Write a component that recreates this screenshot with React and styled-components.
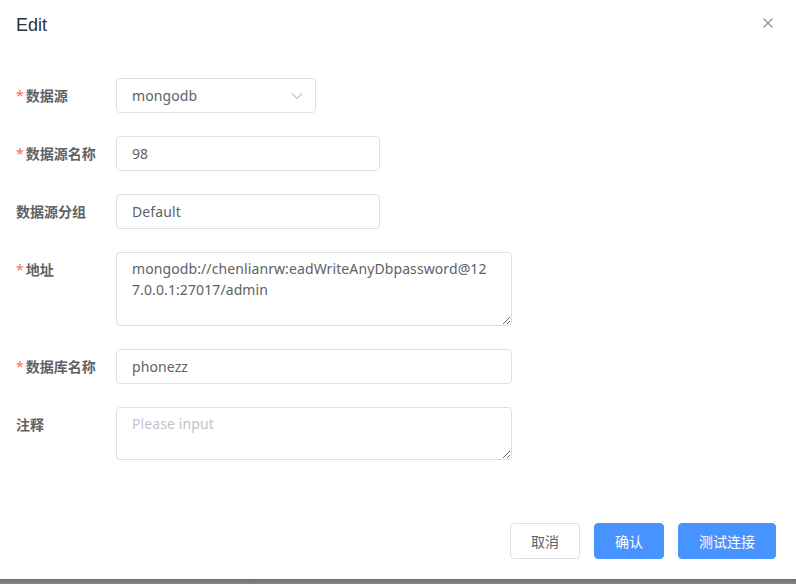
import React from 'react';
import styled, { createGlobalStyle } from 'styled-components';

const GlobalStyle = createGlobalStyle`
  html, body {
    margin: 0;
    padding: 0;
    background: #fff;
  }
  * { box-sizing: border-box; }
  body {
    font-family: "Noto Sans", "Noto Sans CJK SC", sans-serif;
  }
`;

const Page = styled.div`
  height: 584px;
  display: flex;
  flex-direction: column;
`;

const Dialog = styled.div`
  flex: 1;
  display: flex;
  flex-direction: column;
  background: #fff;
`;

const Header = styled.div`
  display: flex;
  justify-content: space-between;
  align-items: center;
  padding: 13px 23px 0 16px;
  height: 37px;
`;

const Title = styled.span`
  font-family: "Liberation Sans", sans-serif;
  font-size: 18px;
  line-height: 26px;
  color: #303133;
`;

const CloseBtn = styled.button`
  border: 0;
  background: none;
  padding: 0;
  width: 10px;
  height: 10px;
  display: flex;
  cursor: pointer;
  margin-top: -4px;
`;

const Form = styled.div`
  padding: 41px 16px 0;
  display: flex;
  flex-direction: column;
  gap: 23px;
`;

const Row = styled.div`
  display: flex;
  align-items: flex-start;
`;

const Label = styled.label`
  width: 100px;
  flex: none;
  font-size: 14px;
  font-weight: 700;
  line-height: 35px;
  color: #606266;
`;

const Star = styled.span`
  color: #f56c6c;
  margin-right: 2px;
  font-weight: 400;
`;

const Field = styled.input`
  width: ${p => p.$w}px;
  height: 35px;
  border: 1px solid #dcdfe6;
  border-radius: 4px;
  padding: 0 15px;
  font: inherit;
  font-size: 14px;
  letter-spacing: 0.1px;
  color: #606266;
  outline: none;
  background: #fff;
`;

const SelectBox = styled.div`
  width: 200px;
  height: 35px;
  border: 1px solid #dcdfe6;
  border-radius: 4px;
  padding: 0 12px 0 15px;
  display: flex;
  align-items: center;
  justify-content: space-between;
  font-size: 14px;
  letter-spacing: 0.1px;
  color: #606266;
  cursor: pointer;
`;

const Area = styled.textarea`
  width: 396px;
  height: ${p => p.$h}px;
  border: 1px solid #dcdfe6;
  border-radius: 4px;
  padding: 5px 20px 5px 15px;
  font: inherit;
  font-size: 14px;
  letter-spacing: 0.1px;
  line-height: 21px;
  color: #606266;
  outline: none;
  display: block;
  &::placeholder { color: #c0c4cc; }
`;

const Footer = styled.div`
  margin-top: auto;
  display: flex;
  justify-content: flex-end;
  gap: 14px;
  padding: 0 20px 20px;
`;

const Button = styled.button`
  height: 36px;
  padding: 0 20px;
  border-radius: 4px;
  font: inherit;
  font-size: 14px;
  cursor: pointer;
  border: 1px solid ${p => (p.$primary ? '#4793ff' : '#dcdfe6')};
  background: ${p => (p.$primary ? '#4793ff' : '#fff')};
  color: ${p => (p.$primary ? '#fff' : '#606266')};
`;

const Bar = styled.div`
  height: 5px;
  flex: none;
  background: linear-gradient(#6e6e6e, #868686);
`;

function Chevron() {
  return (
    <svg width="12" height="8" viewBox="0 0 12 8">
      <polyline points="1,1.5 6,6.5 11,1.5" fill="none" stroke="#c0c4cc" strokeWidth="1.1" />
    </svg>
  );
}

function CloseIcon() {
  return (
    <svg width="10" height="10" viewBox="0 0 10 10">
      <path d="M0.5 0.5 L9.5 9.5 M9.5 0.5 L0.5 9.5" stroke="#909399" strokeWidth="1.2" />
    </svg>
  );
}

export default function App() {
  return (
    <Page>
      <GlobalStyle />
      <Dialog>
        <Header>
          <Title>Edit</Title>
          <CloseBtn aria-label="close"><CloseIcon /></CloseBtn>
        </Header>
        <Form>
          <Row>
            <Label><Star>*</Star>数据源</Label>
            <SelectBox>
              <span>mongodb</span>
              <Chevron />
            </SelectBox>
          </Row>
          <Row>
            <Label><Star>*</Star>数据源名称</Label>
            <Field $w={264} defaultValue="98" />
          </Row>
          <Row>
            <Label>数据源分组</Label>
            <Field $w={264} defaultValue="Default" />
          </Row>
          <Row>
            <Label><Star>*</Star>地址</Label>
            <Area $h={74} defaultValue="mongodb://chenlianrw:eadWriteAnyDbpassword@127.0.0.1:27017/admin" />
          </Row>
          <Row>
            <Label><Star>*</Star>数据库名称</Label>
            <Field $w={396} defaultValue="phonezz" />
          </Row>
          <Row>
            <Label>注释</Label>
            <Area $h={53} placeholder="Please input" />
          </Row>
        </Form>
        <Footer>
          <Button>取消</Button>
          <Button $primary>确认</Button>
          <Button $primary>测试连接</Button>
        </Footer>
      </Dialog>
      <Bar />
    </Page>
  );
}
